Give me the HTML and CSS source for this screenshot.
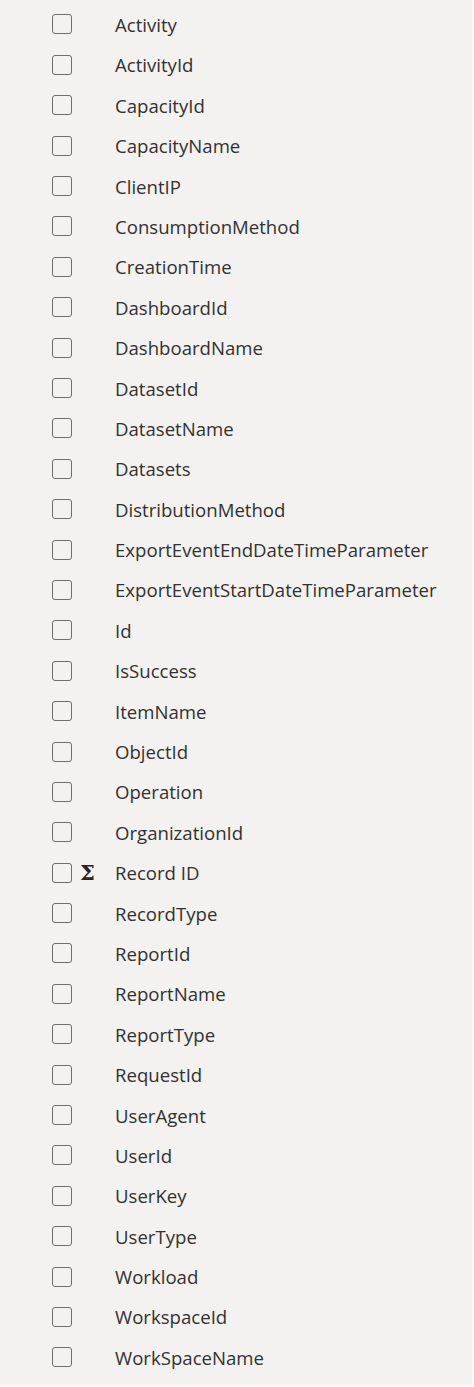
FILE: index.html
```html
<!DOCTYPE html>
<html>
<head>
<meta charset="utf-8">
<link rel="stylesheet" href="styles.css">
</head>
<body>
<div class="panel">
  <ul class="fields">
    <li class="field"><span class="box"></span><span class="icon"></span><span class="name">Activity</span></li>
    <li class="field"><span class="box"></span><span class="icon"></span><span class="name">ActivityId</span></li>
    <li class="field"><span class="box"></span><span class="icon"></span><span class="name">CapacityId</span></li>
    <li class="field"><span class="box"></span><span class="icon"></span><span class="name">CapacityName</span></li>
    <li class="field"><span class="box"></span><span class="icon"></span><span class="name">ClientIP</span></li>
    <li class="field"><span class="box"></span><span class="icon"></span><span class="name">ConsumptionMethod</span></li>
    <li class="field"><span class="box"></span><span class="icon"></span><span class="name">CreationTime</span></li>
    <li class="field"><span class="box"></span><span class="icon"></span><span class="name">DashboardId</span></li>
    <li class="field"><span class="box"></span><span class="icon"></span><span class="name">DashboardName</span></li>
    <li class="field"><span class="box"></span><span class="icon"></span><span class="name">DatasetId</span></li>
    <li class="field"><span class="box"></span><span class="icon"></span><span class="name">DatasetName</span></li>
    <li class="field"><span class="box"></span><span class="icon"></span><span class="name">Datasets</span></li>
    <li class="field"><span class="box"></span><span class="icon"></span><span class="name">DistributionMethod</span></li>
    <li class="field"><span class="box"></span><span class="icon"></span><span class="name">ExportEventEndDateTimeParameter</span></li>
    <li class="field"><span class="box"></span><span class="icon"></span><span class="name">ExportEventStartDateTimeParameter</span></li>
    <li class="field"><span class="box"></span><span class="icon"></span><span class="name">Id</span></li>
    <li class="field"><span class="box"></span><span class="icon"></span><span class="name">IsSuccess</span></li>
    <li class="field"><span class="box"></span><span class="icon"></span><span class="name">ItemName</span></li>
    <li class="field"><span class="box"></span><span class="icon"></span><span class="name">ObjectId</span></li>
    <li class="field"><span class="box"></span><span class="icon"></span><span class="name">Operation</span></li>
    <li class="field"><span class="box"></span><span class="icon"></span><span class="name">OrganizationId</span></li>
    <li class="field"><span class="box"></span><span class="icon sigma">&Sigma;</span><span class="name">Record ID</span></li>
    <li class="field"><span class="box"></span><span class="icon"></span><span class="name">RecordType</span></li>
    <li class="field"><span class="box"></span><span class="icon"></span><span class="name">ReportId</span></li>
    <li class="field"><span class="box"></span><span class="icon"></span><span class="name">ReportName</span></li>
    <li class="field"><span class="box"></span><span class="icon"></span><span class="name">ReportType</span></li>
    <li class="field"><span class="box"></span><span class="icon"></span><span class="name">RequestId</span></li>
    <li class="field"><span class="box"></span><span class="icon"></span><span class="name">UserAgent</span></li>
    <li class="field"><span class="box"></span><span class="icon"></span><span class="name">UserId</span></li>
    <li class="field"><span class="box"></span><span class="icon"></span><span class="name">UserKey</span></li>
    <li class="field"><span class="box"></span><span class="icon"></span><span class="name">UserType</span></li>
    <li class="field"><span class="box"></span><span class="icon"></span><span class="name">Workload</span></li>
    <li class="field"><span class="box"></span><span class="icon"></span><span class="name">WorkspaceId</span></li>
    <li class="field"><span class="box"></span><span class="icon"></span><span class="name">WorkSpaceName</span></li>
  </ul>
</div>
</body>
</html>
```
FILE: styles.css
```css
html, body {
  margin: 0;
  padding: 0;
  background: #f3f2f1;
}
.panel {
  width: 472px;
  height: 1385px;
  background: #f3f2f1;
  border-right: 2px solid #fbfbfa;
  border-bottom: 2px solid #ffffff;
  box-sizing: content-box;
}
.fields {
  list-style: none;
  margin: 0;
  padding: 4.3px 0 0 0;
}
.field {
  height: 40.4px;
  display: flex;
  align-items: center;
  padding-left: 52px;
  font-family: "Open Sans", "Noto Sans", sans-serif;
  font-size: 18.6px;
  color: #323130;
}
.box {
  width: 20px;
  height: 20px;
  box-sizing: border-box;
  border: 1.5px solid #6f6d6b;
  border-radius: 3px;
  flex: none;
}
.icon {
  width: 43px;
  flex: none;
  text-align: left;
  padding-left: 8px;
  box-sizing: border-box;
}
.sigma {
  font-family: "DejaVu Serif", serif;
  font-weight: bold;
  font-size: 21px;
  line-height: 1;
  color: #252423;
}
.name {
  white-space: nowrap;
}
```
